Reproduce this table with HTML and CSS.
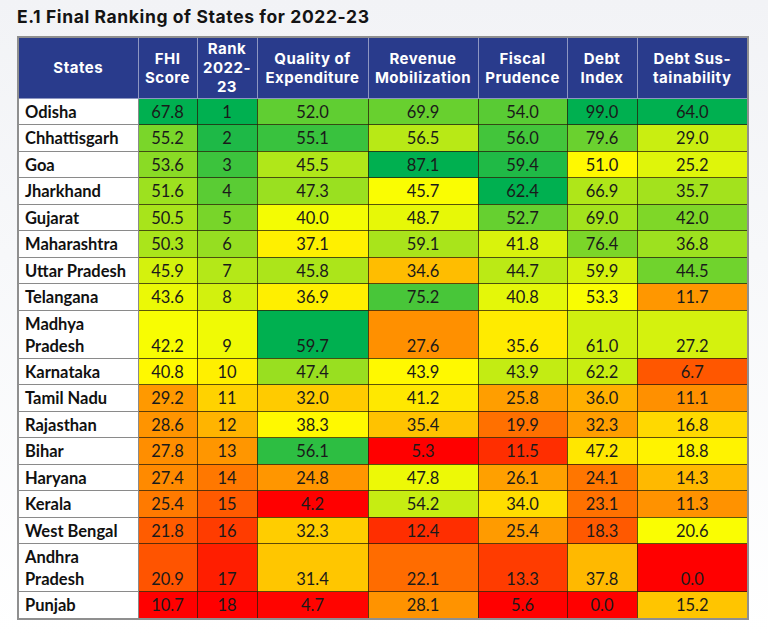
FILE: index.html
```html
<!DOCTYPE html>
<html lang="en">
<head>
<meta charset="utf-8">
<title>E.1 Final Ranking of States for 2022-23</title>
<link rel="stylesheet" href="styles.css">
</head>
<body>
<h1 class="title">E.1 Final Ranking of States for 2022-23</h1>
<table class="ranking" id="ranking">
  <colgroup>
    <col class="c-state"><col class="c-fhi"><col class="c-rank"><col class="c-qe">
    <col class="c-rm"><col class="c-fp"><col class="c-di"><col class="c-ds">
  </colgroup>
  <thead>
    <tr>
      <th>States</th>
      <th>FHI<br>Score</th>
      <th data-reverse="1">Rank<br>2022-<br>23</th>
      <th>Quality of<br>Expenditure</th>
      <th>Revenue<br>Mobilization</th>
      <th>Fiscal<br>Prudence</th>
      <th>Debt<br>Index</th>
      <th>Debt Sus-<br>tainability</th>
    </tr>
  </thead>
  <tbody>
    <tr><td class="state">Odisha</td><td>67.8</td><td>1</td><td>52.0</td><td>69.9</td><td>54.0</td><td>99.0</td><td>64.0</td></tr>
    <tr><td class="state">Chhattisgarh</td><td>55.2</td><td>2</td><td>55.1</td><td>56.5</td><td>56.0</td><td>79.6</td><td>29.0</td></tr>
    <tr><td class="state">Goa</td><td>53.6</td><td>3</td><td>45.5</td><td>87.1</td><td>59.4</td><td>51.0</td><td>25.2</td></tr>
    <tr><td class="state">Jharkhand</td><td>51.6</td><td>4</td><td>47.3</td><td>45.7</td><td>62.4</td><td>66.9</td><td>35.7</td></tr>
    <tr><td class="state">Gujarat</td><td>50.5</td><td>5</td><td>40.0</td><td>48.7</td><td>52.7</td><td>69.0</td><td>42.0</td></tr>
    <tr><td class="state">Maharashtra</td><td>50.3</td><td>6</td><td>37.1</td><td>59.1</td><td>41.8</td><td>76.4</td><td>36.8</td></tr>
    <tr><td class="state">Uttar Pradesh</td><td>45.9</td><td>7</td><td>45.8</td><td>34.6</td><td>44.7</td><td>59.9</td><td>44.5</td></tr>
    <tr><td class="state">Telangana</td><td>43.6</td><td>8</td><td>36.9</td><td>75.2</td><td>40.8</td><td>53.3</td><td>11.7</td></tr>
    <tr><td class="state">Madhya<br>Pradesh</td><td>42.2</td><td>9</td><td>59.7</td><td>27.6</td><td>35.6</td><td>61.0</td><td>27.2</td></tr>
    <tr><td class="state">Karnataka</td><td>40.8</td><td>10</td><td>47.4</td><td>43.9</td><td>43.9</td><td>62.2</td><td>6.7</td></tr>
    <tr><td class="state">Tamil Nadu</td><td>29.2</td><td>11</td><td>32.0</td><td>41.2</td><td>25.8</td><td>36.0</td><td>11.1</td></tr>
    <tr><td class="state">Rajasthan</td><td>28.6</td><td>12</td><td>38.3</td><td>35.4</td><td>19.9</td><td>32.3</td><td>16.8</td></tr>
    <tr><td class="state">Bihar</td><td>27.8</td><td>13</td><td>56.1</td><td>5.3</td><td>11.5</td><td>47.2</td><td>18.8</td></tr>
    <tr><td class="state">Haryana</td><td>27.4</td><td>14</td><td>24.8</td><td>47.8</td><td>26.1</td><td>24.1</td><td>14.3</td></tr>
    <tr><td class="state">Kerala</td><td>25.4</td><td>15</td><td>4.2</td><td>54.2</td><td>34.0</td><td>23.1</td><td>11.3</td></tr>
    <tr><td class="state">West Bengal</td><td>21.8</td><td>16</td><td>32.3</td><td>12.4</td><td>25.4</td><td>18.3</td><td>20.6</td></tr>
    <tr><td class="state">Andhra<br>Pradesh</td><td>20.9</td><td>17</td><td>31.4</td><td>22.1</td><td>13.3</td><td>37.8</td><td>0.0</td></tr>
    <tr><td class="state">Punjab</td><td>10.7</td><td>18</td><td>4.7</td><td>28.1</td><td>5.6</td><td>0.0</td><td>15.2</td></tr>
  </tbody>
</table>
<script src="script.js"></script>
</body>
</html>
```

FILE: styles.css
```css
html, body {
  margin: 0;
  padding: 0;
}
body {
  width: 768px;
  height: 635px;
  overflow: hidden;
  background: linear-gradient(180deg, #f2f3f6 0%, #f7f8fa 40%, #ffffff 100%);
  padding: 6px 0 0 17px;
  box-sizing: border-box;
  font-family: "Lato", "Open Sans", sans-serif;
  color: #111;
}
.title {
  margin: 0 0 8px;
  font-family: "Inter", "Open Sans", sans-serif;
  font-weight: 700;
  font-size: 17.5px;
  line-height: 22px;
  letter-spacing: 0.6px;
  color: #141414;
}
.ranking {
  border-collapse: collapse;
  table-layout: fixed;
  width: 730px;
  border: 2px solid #8f8f8f;
}
.c-state { width: 120px; }
.c-fhi { width: 59px; }
.c-rank { width: 60px; }
.c-qe { width: 111px; }
.c-rm { width: 110px; }
.c-fp { width: 89px; }
.c-di { width: 70px; }
.c-ds { width: 111px; }

.ranking th {
  background: #293b8c;
  color: #fff;
  font-family: "Inter", "Open Sans", sans-serif;
  font-weight: 700;
  font-size: 15px;
  letter-spacing: 0.5px;
  line-height: 19px;
  height: 57px;
  padding: 1px 0 2px;
  border: 1px solid #8d96c2;
  text-align: center;
  vertical-align: middle;
}
.ranking td {
  border: 1px solid rgba(40, 30, 10, 0.75);
  padding: 2px 0 1.44px;
  line-height: 22px;
  font-size: 16.5px;
  text-align: center;
  vertical-align: bottom;
  white-space: nowrap;
  color: #1a1a1a;
}
.ranking td.state {
  background: #fff;
  text-align: left;
  padding-left: 6px;
  font-weight: 700;
  font-size: 16.5px;
  border-color: #8a8a8a;
  color: #111;
}
```

FILE: script.js
```js
(function () {
  var table = document.getElementById('ranking');
  var heads = table.querySelectorAll('thead th');
  var rows = table.querySelectorAll('tbody tr');
  var RED = [255, 0, 0], YELLOW = [255, 255, 0], GREEN = [0, 176, 80];

  function lerp(a, b, t) {
    return [0, 1, 2].map(function (i) { return Math.round(a[i] + (b[i] - a[i]) * t); });
  }

  for (var c = 1; c < heads.length; c++) {
    var reverse = heads[c].getAttribute('data-reverse') === '1';
    var cells = [], vals = [];
    rows.forEach(function (r) {
      var cell = r.children[c];
      cells.push(cell);
      vals.push(parseFloat(cell.textContent));
    });
    var sorted = vals.slice().sort(function (a, b) { return a - b; });
    var n = sorted.length;
    var min = sorted[0], max = sorted[n - 1];
    var pos = (n - 1) * 0.5, lo = Math.floor(pos), hi = Math.ceil(pos);
    var mid = sorted[lo] + (sorted[hi] - sorted[lo]) * (pos - lo);
    cells.forEach(function (cell, i) {
      var v = vals[i], col;
      if (v <= mid) {
        var t = mid === min ? 1 : (v - min) / (mid - min);
        col = reverse ? lerp(GREEN, YELLOW, t) : lerp(RED, YELLOW, t);
      } else {
        var t2 = max === mid ? 1 : (v - mid) / (max - mid);
        col = reverse ? lerp(YELLOW, RED, t2) : lerp(YELLOW, GREEN, t2);
      }
      cell.style.backgroundColor = 'rgb(' + col.join(',') + ')';
    });
  }
})();
```
